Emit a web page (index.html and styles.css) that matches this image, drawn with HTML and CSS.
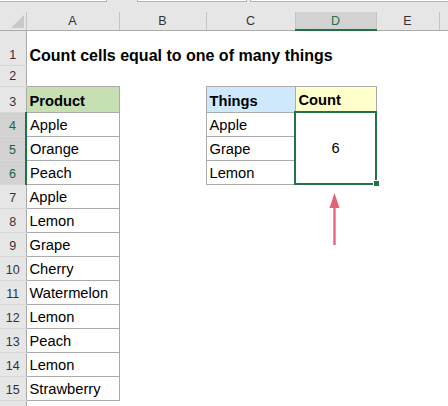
FILE: index.html
```html
<!DOCTYPE html>
<html lang="en">
<head>
    <meta charset="UTF-8">
    <title>Count cells equal to one of many things</title>
    <link rel="stylesheet" href="styles.css">
</head>
<body>
<div class="sheet">
    <!-- Restos da barra de fórmulas -->
    <div class="topbar">
        <span class="box box-name"></span>
        <span class="box box-fx"></span>
        <span class="box box-wide"></span>
    </div>

    <table class="grid">
        <colgroup>
            <col class="c-rh">
            <col class="c-a">
            <col class="c-b">
            <col class="c-c">
            <col class="c-d">
            <col class="c-e">
            <col class="c-f">
        </colgroup>
        <tr class="hdr">
            <th class="corner"><span class="tri"></span></th>
            <th>A</th>
            <th>B</th>
            <th>C</th>
            <th class="sel">D</th>
            <th>E</th>
            <th class="last"></th>
        </tr>
        <tr class="r1">
            <th class="rh">1</th>
            <td colspan="6" class="title">Count cells equal to one of many things</td>
        </tr>
        <tr class="r2">
            <th class="rh">2</th>
            <td colspan="6"></td>
        </tr>
        <tr class="r3">
            <th class="rh">3</th>
            <td class="b head green">Product</td>
            <td></td>
            <td class="b head blue">Things</td>
            <td class="b head yellow">Count</td>
            <td colspan="2"></td>
        </tr>
        <tr>
            <th class="rh sel">4</th>
            <td class="b">Apple</td>
            <td></td>
            <td class="b">Apple</td>
            <td class="count" rowspan="3">6</td>
            <td colspan="2"></td>
        </tr>
        <tr>
            <th class="rh sel">5</th>
            <td class="b">Orange</td>
            <td></td>
            <td class="b">Grape</td>
            <td colspan="2"></td>
        </tr>
        <tr>
            <th class="rh sel">6</th>
            <td class="b">Peach</td>
            <td></td>
            <td class="b">Lemon</td>
            <td colspan="2"></td>
        </tr>
        <tr><th class="rh">7</th><td class="b">Apple</td><td colspan="5"></td></tr>
        <tr><th class="rh">8</th><td class="b">Lemon</td><td colspan="5"></td></tr>
        <tr><th class="rh">9</th><td class="b">Grape</td><td colspan="5"></td></tr>
        <tr><th class="rh">10</th><td class="b">Cherry</td><td colspan="5"></td></tr>
        <tr><th class="rh">11</th><td class="b">Watermelon</td><td colspan="5"></td></tr>
        <tr><th class="rh">12</th><td class="b">Lemon</td><td colspan="5"></td></tr>
        <tr><th class="rh">13</th><td class="b">Peach</td><td colspan="5"></td></tr>
        <tr><th class="rh">14</th><td class="b">Lemon</td><td colspan="5"></td></tr>
        <tr><th class="rh">15</th><td class="b">Strawberry</td><td colspan="5"></td></tr>
        <tr><th class="rh">&nbsp;</th><td colspan="6"></td></tr>
    </table>

    <!-- Alça de preenchimento da seleção -->
    <span class="fill-handle"></span>

    <!-- Seta apontando para o resultado -->
    <svg class="arrow" width="14" height="54" viewBox="0 0 14 54">
        <line x1="6.5" y1="12" x2="6.5" y2="53" stroke="#e0637a" stroke-width="2.3"/>
        <polygon points="1.5,16 6.5,1 11.5,16" fill="#e0637a"/>
    </svg>
</div>
</body>
</html>
```

FILE: styles.css
```css
/* Estilos gerais */
body {
    margin: 0;
    padding: 0;
    background-color: #fff;
    font-family: "Liberation Sans", Arial, sans-serif;
    color: #000;
}

.sheet {
    position: relative;
    width: 448px;
    height: 406px;
    overflow: hidden;
}

/* Barra superior */
.topbar {
    display: flex;
    height: 12px;
    background-color: #e6e6e6;
}

.topbar .box {
    display: block;
    height: 1px;
    background-color: #fff;
    border: 1px solid #b4b4b4;
    border-top: none;
}

.topbar .box-name {
    width: 106px;
    border-left: none;
}

.topbar .box-fx {
    width: 108px;
    margin-left: 30px;
}

.topbar .box-wide {
    flex: 1;
    margin-left: 3px;
    border-right: none;
}

/* Planilha */
.grid {
    border-collapse: collapse;
    table-layout: fixed;
    width: 448px;
}

.c-rh { width: 26px; }
.c-a { width: 93px; }
.c-b { width: 87px; }
.c-c { width: 89px; }
.c-d { width: 81px; }
.c-e { width: 63px; }
.c-f { width: 9px; }

.grid th,
.grid td {
    padding: 0;
    overflow: visible;
    white-space: nowrap;
}

.grid td {
    font-size: 14.7px;
    line-height: 17px;
    vertical-align: bottom;
    padding: 0 0 2px 3px;
    height: 21px;
}

/* Cabeçalhos de colunas */
.hdr th {
    height: 17px;
    background-color: #e6e6e6;
    border-right: 1px solid #c4c4c4;
    border-bottom: 1px solid #ababab;
    font-weight: normal;
    font-size: 12.5px;
    color: #333;
    text-align: center;
    vertical-align: middle;
}

.hdr th.sel {
    background-color: #d2d2d2;
    border-bottom: 2px solid #217346;
    color: #217346;
}

.hdr th.last {
    border-right: none;
}

.corner {
    position: relative;
}

.corner .tri {
    position: absolute;
    right: 2px;
    bottom: 2px;
    width: 0;
    height: 0;
    border-left: 13px solid transparent;
    border-bottom: 13px solid #c8c8c8;
}

/* Cabeçalhos de linhas */
.grid th.rh {
    background-color: #e6e6e6;
    border-right: 1px solid #ababab;
    border-bottom: 1px solid #d8d8d8;
    font-weight: normal;
    font-size: 12.5px;
    line-height: 14px;
    color: #333;
    text-align: center;
    vertical-align: bottom;
    padding-bottom: 3px;
}

.grid th.rh.sel {
    background-color: #d2d2d2;
    border-right: 2px solid #217346;
    color: #21603c;
}

.r1 td {
    height: 33px;
    padding-bottom: 0;
}

.r2 td {
    height: 19px;
}

.r3 td {
    height: 22px;
}

.grid td.title {
    font-size: 16px;
    font-weight: bold;
    padding-bottom: 1px;
}

/* Células com borda */
.grid td.b {
    border: 1px solid #ababab;
}

.grid td.head {
    font-weight: bold;
}

.green { background-color: #c6e0b4; }
.blue { background-color: #cde9fb; }
.yellow { background-color: #ffffcc; }

.grid td.count {
    border: 2px solid #217346;
    text-align: center;
    vertical-align: middle;
    padding: 0;
}

.fill-handle {
    position: absolute;
    left: 373px;
    top: 180px;
    width: 5px;
    height: 5px;
    background-color: #217346;
    border: 1px solid #fff;
}

.arrow {
    position: absolute;
    left: 328px;
    top: 192px;
}
```
